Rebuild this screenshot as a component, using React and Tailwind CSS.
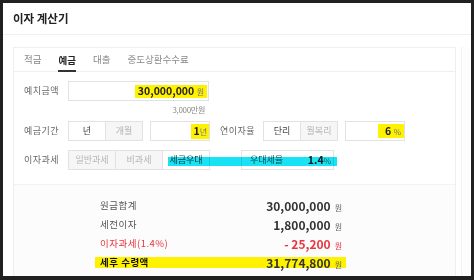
import React from "react";

const FONT = { fontFamily: '"Noto Sans CJK KR", "Noto Sans", sans-serif' };

const tabs = ["적금", "예금", "대출", "중도상환수수료"];

const results = [
  { label: "원금합계", value: "30,000,000" },
  { label: "세전이자", value: "1,800,000" },
  { label: "이자과세(1.4%)", value: "- 25,200", red: true },
  { label: "세후 수령액", value: "31,774,800", total: true },
];

const Seg = ({ items, widths, active }) => (
  <div className="flex h-[20px]">
    {items.map((item, i) => (
      <div
        key={item}
        className={`flex items-center justify-center border border-[#e2e2e2] text-[9px] ${
          i > 0 ? "-ml-px" : ""
        } ${i === active ? "bg-white text-[#444]" : "bg-[#f6f6f6] text-[#b5b5b5]"}`}
        style={{ width: widths[i] }}
      >
        {item}
      </div>
    ))}
  </div>
);

const Label = ({ children, className = "" }) => (
  <div className={`text-[9px] text-[#666] tracking-[0.5px] ${className}`}>{children}</div>
);

export default function App() {
  return (
    <div className="w-[474px] h-[280px] bg-[#202020] pt-[3px] px-[3px] pb-[4px]" style={FONT}>
      <div className="h-full bg-white overflow-hidden flex flex-col">
        {/* header */}
        <div className="h-[32px] shrink-0 border-b border-[#f0f0f0] flex items-center pl-[10px]">
          <h1 className="text-[11.5px] font-bold text-[#222] leading-none">이자 계산기</h1>
        </div>

        <div className="flex pt-[12px]">
          <div className="ml-[10px] w-[443px] border border-[#efefef] flex flex-col">
            {/* tabs */}
            <div className="h-[24px] border-b border-[#efefef] flex items-stretch pl-[10px] gap-[17px]">
              {tabs.map((t) => (
                <div
                  key={t}
                  className={`flex items-center text-[9.5px] ${
                    t === "예금"
                      ? "font-bold text-[#222] border-b-2 border-[#333] -mb-px pt-[2px]"
                      : "text-[#888]"
                  }`}
                >
                  {t}
                </div>
              ))}
            </div>

            {/* form */}
            <div className="pl-[10px] pt-[9px]">
              <div className="flex items-center h-[20px]">
                <Label className="w-[44px]">예치금액</Label>
                <div className="w-[141px] h-[20px] border border-[#e2e2e2] flex items-center justify-end pr-[1px]">
                  <span className="bg-[#fff200] leading-[12px] pl-[3px] pr-[3px] text-[10.5px] font-bold text-[#222]">
                    30,000,000 <span className="text-[8px] font-normal text-[#777]">원</span>
                  </span>
                </div>
              </div>
              <div className="w-[185px] h-[20px] pt-[2px] pr-[4px] text-right text-[8px] leading-[14px] text-[#888] tracking-[-0.3px]">
                3,000만원
              </div>

              <div className="flex items-center h-[20px]">
                <Label className="w-[44px]">예금기간</Label>
                <Seg items={["년", "개월"]} widths={[38, 38]} active={0} />
                <div className="ml-[7px] w-[60px] h-[20px] border border-[#e2e2e2] flex items-center justify-end">
                  <span className="bg-[#fff200] leading-[14px] px-[2px] text-[10.5px] font-bold text-[#222]">
                    1<span className="text-[8px] font-normal text-[#777]">년</span>
                  </span>
                </div>
                <Label className="ml-[10px] w-[43px] text-[#444]">연이자율</Label>
                <Seg items={["단리", "월복리"]} widths={[38, 38]} active={0} />
                <div className="ml-[7px] w-[60px] h-[20px] border border-[#e2e2e2] flex items-center justify-end">
                  <span className="bg-[#fff200] leading-[13px] pl-[7px] pr-[3px] text-[10.5px] font-bold text-[#222]">
                    6 <span className="text-[8px] font-normal text-[#777]">%</span>
                  </span>
                </div>
              </div>

              <div className="relative flex items-center h-[20px] mt-[9px]">
                <Label className="w-[44px]">이자과세</Label>
                <Seg items={["일반과세", "비과세", "세금우대"]} widths={[48, 48, 48]} active={2} />
                <div className="ml-[31px] w-[93px] h-[20px] border border-[#e2e2e2] flex items-center justify-between pl-[8px] pr-[2px]">
                  <span className="text-[9px] text-[#555]">우대세율</span>
                  <span className="text-[10.5px] font-bold text-[#222]">
                    1.4<span className="text-[8px] font-normal text-[#777]">%</span>
                  </span>
                </div>
                <div className="absolute left-[144px] top-[7px] w-[169px] h-[9px] bg-[#18e2f4] mix-blend-multiply" />
              </div>
            </div>

            {/* results */}
            <div className="mt-[14px] border-t border-[#f2f2f2] bg-[#fcfcfc] h-[110px] pt-[11px] pl-[86px]">
              {results.map((r) => (
                <div key={r.label} className="relative w-[242px] h-[19px]">
                  {r.total && (
                    <div className="absolute -left-[5px] -right-[4px] top-[4px] h-[11px] bg-[#fff200]" />
                  )}
                  <div className="relative h-full flex items-center justify-between">
                    <span
                      className={`text-[9.5px] tracking-[0.5px] ${
                        r.red ? "text-[#e8363e]" : r.total ? "font-bold text-[#111]" : "text-[#555]"
                      }`}
                    >
                      {r.label}
                    </span>
                    <span className={`text-[12px] font-bold ${r.red ? "text-[#e8363e]" : "text-[#333]"}`}>
                      {r.value}
                      <span className={`ml-[4px] text-[8px] font-normal ${r.red ? "text-[#e8363e]" : "text-[#666]"}`}>
                        원
                      </span>
                    </span>
                  </div>
                </div>
              ))}
            </div>
          </div>
          <div className="ml-[5px] w-[9px] h-[240px] bg-[#fdfdfd] border-l border-[#f2f2f2]" />
        </div>
      </div>
    </div>
  );
}
